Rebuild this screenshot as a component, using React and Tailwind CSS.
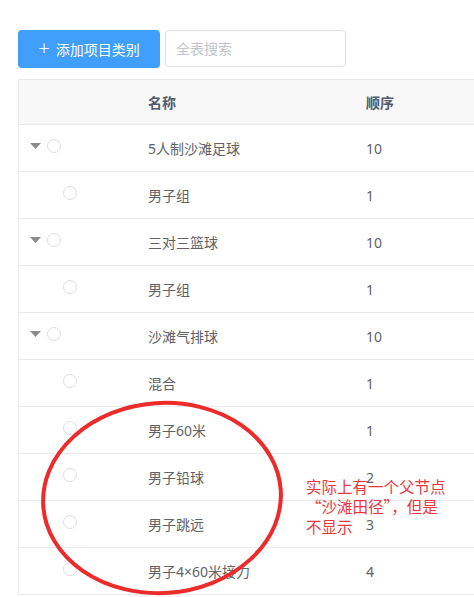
import React from 'react'

const rows = [
  { name: '5人制沙滩足球', order: 10, parent: true },
  { name: '男子组', order: 1 },
  { name: '三对三篮球', order: 10, parent: true },
  { name: '男子组', order: 1 },
  { name: '沙滩气排球', order: 10, parent: true },
  { name: '混合', order: 1 },
  { name: '男子60米', order: 1 },
  { name: '男子铅球', order: 2 },
  { name: '男子跳远', order: 3 },
  { name: '男子4×60米接力', order: 4 },
]

function Radio() {
  return <span className="block w-[14px] h-[14px] rounded-full border border-[#dcdee2] bg-white" />
}

export default function App() {
  return (
    <div className="relative w-[474px] h-[597px] overflow-hidden bg-white text-[14px] text-[#606266]" style={{ fontFamily: '"Noto Sans", "Noto Sans CJK SC", sans-serif' }}>
      <div className="pl-[18px] pt-[30px]">
        <div className="flex gap-[5px]">
          <button className="h-[38px] w-[142px] rounded-[4px] bg-[#409ffa] text-white flex items-center justify-center gap-[6px] text-[14px]">
            <span className="text-[20px] font-light leading-none -mt-[2px]">+</span>
            <span>添加项目类别</span>
          </button>
          <div className="h-[37px] w-[181px] rounded-[4px] border border-[#dcdfe6] flex items-center pl-[10px] text-[#c0c4cc]">全表搜索</div>
        </div>

        <div className="mt-[11px] border-l border-[#e8eaec]">
          <div className="grid grid-cols-[111px_218px_1fr] h-[46px] items-center bg-[#f8f8f9] border-t border-b border-[#e8eaec] font-bold text-[#515a6e]">
            <div />
            <div className="pl-[18px]">名称</div>
            <div className="pl-[18px]">顺序</div>
          </div>
          {rows.map((r, i) => (
            <div key={i} className="grid grid-cols-[111px_218px_1fr] h-[47px] items-center border-b border-[#e8eaec]">
              <div className="flex items-center -mt-[4px]">
                {r.parent ? (
                  <div className="flex items-center pl-[11px] gap-[6px]">
                    <svg width="11" height="6" viewBox="0 0 11 6"><path d="M0 0 L11 0 L5.5 6 Z" fill="#8c8c8c" /></svg>
                    <Radio />
                  </div>
                ) : (
                  <div className="pl-[44px]"><Radio /></div>
                )}
              </div>
              <div className="pl-[18px] whitespace-nowrap">{r.name}</div>
              <div className="pl-[18px]">{r.order}</div>
            </div>
          ))}
        </div>
      </div>

      <svg className="absolute left-0 top-0 pointer-events-none" width="474" height="597">
        <ellipse cx="162" cy="498" rx="119" ry="95" fill="none" stroke="#ec2b2b" strokeWidth="4" transform="rotate(-4 162 498)" />
      </svg>
      <div className="absolute left-[306px] top-[476px] text-[15.5px] leading-[20px] text-[#e8383f]" style={{ fontFamily: '"Noto Sans CJK SC", sans-serif' }}>
        <div>实际上有一个父节点</div>
        <div>“沙滩田径”，但是</div>
        <div>不显示</div>
      </div>
    </div>
  )
}
